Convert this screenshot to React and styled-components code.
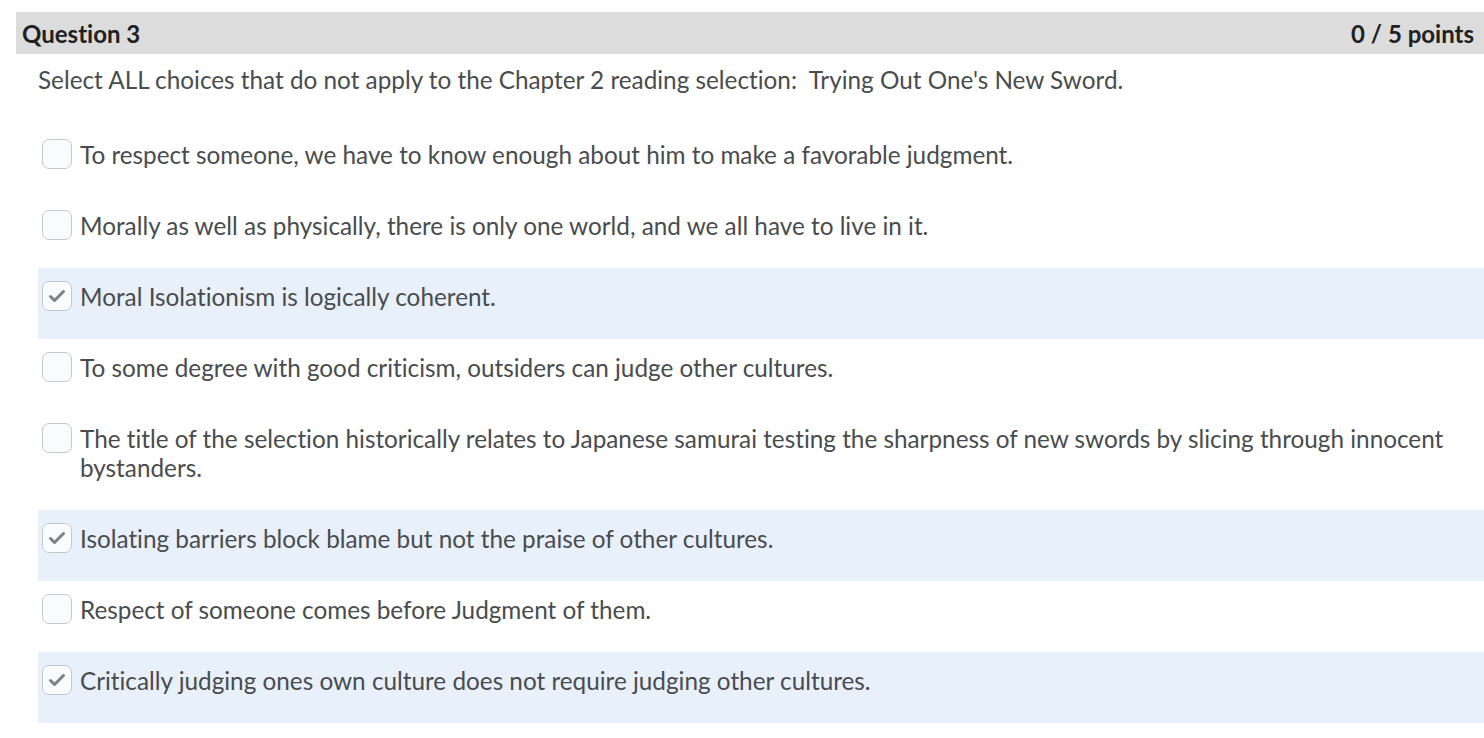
import React from 'react';
import styled, { createGlobalStyle } from 'styled-components';

const GlobalStyle = createGlobalStyle`
    body {
        margin: 0;
        background: #ffffff;
        font-family: Lato, 'Noto Sans', sans-serif;
        font-variant-ligatures: none;
    }
`;

const Page = styled.div`
    padding: 12px 0 0 16px;
`;

const QuestionHeader = styled.div`
    display: flex;
    justify-content: space-between;
    align-items: center;
    height: 42px;
    padding: 0 10px 0 6px;
    background: #dcdcdc;
    color: #202122;
    font-size: 24px;
    font-weight: 700;
`;

const Body = styled.div`
    padding: 11px 0 0 22px;
`;

const Prompt = styled.p`
    margin: 0 0 32px 0;
    color: #494c4e;
    font-size: 24.3px;
    line-height: 29px;
`;

const Choices = styled.div`
    display: flex;
    flex-direction: column;
`;

const Choice = styled.label`
    display: flex;
    align-items: flex-start;
    gap: 8px;
    padding: 14px 30px 28px 4px;
    background: ${props => (props.checked ? '#e8f0fc' : 'transparent')};
`;

const Box = styled.span`
    flex: 0 0 auto;
    display: flex;
    align-items: center;
    justify-content: center;
    width: 28px;
    height: 28px;
    margin-top: -1px;
    border: 1px solid #c6c9cc;
    border-radius: 7px;
    background: #f9fbff;
`;

const ChoiceText = styled.span`
    flex: 1;
    color: #494c4e;
    font-size: 24.3px;
    line-height: 29px;
`;

const Check = () => (
    <svg width="18" height="14" viewBox="0 0 18 14">
        <path d="M2.5 7.5 L6.5 11.5 L15.5 2.5" fill="none" stroke="#7d8084" strokeWidth="3" strokeLinecap="round" strokeLinejoin="round" />
    </svg>
);

const choices = [
    { text: 'To respect someone, we have to know enough about him to make a favorable judgment.', checked: false },
    { text: 'Morally as well as physically, there is only one world, and we all have to live in it.', checked: false },
    { text: 'Moral Isolationism is logically coherent.', checked: true },
    { text: 'To some degree with good criticism, outsiders can judge other cultures.', checked: false },
    { text: 'The title of the selection historically relates to Japanese samurai testing the sharpness of new swords by slicing through innocent bystanders.', checked: false },
    { text: 'Isolating barriers block blame but not the praise of other cultures.', checked: true },
    { text: 'Respect of someone comes before Judgment of them.', checked: false },
    { text: 'Critically judging ones own culture does not require judging other cultures.', checked: true },
];

const App = () => {
    return (
        <Page>
            <GlobalStyle />
            <QuestionHeader>
                <span>Question 3</span>
                <span>0 / 5 points</span>
            </QuestionHeader>
            <Body>
                <Prompt>
                    Select ALL choices that do not apply to the Chapter 2 reading selection:&nbsp; Trying Out One's New Sword.
                </Prompt>
                <Choices>
                    {choices.map((choice, i) => (
                        <Choice key={i} checked={choice.checked}>
                            <Box>{choice.checked && <Check />}</Box>
                            <ChoiceText>{choice.text}</ChoiceText>
                        </Choice>
                    ))}
                </Choices>
            </Body>
        </Page>
    );
};

export default App;
